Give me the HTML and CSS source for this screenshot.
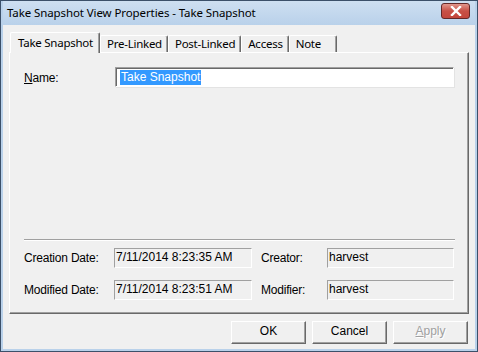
FILE: index.html
```html
<!DOCTYPE html>
<html>
  <head>
    <meta charset="UTF-8">
    <title>Take Snapshot View Properties - Take Snapshot</title>
    <link rel="stylesheet" href="styles.css">
  </head>
  <body>
    <div class="window">
      <div class="titleBar">
        <span class="titleText">Take Snapshot View Properties - Take Snapshot</span>
        <span class="closeButton">
          <svg width="14" height="10" viewBox="0 0 14 10"><path d="M3 1 L11 9 M11 1 L3 9" stroke="#fff" stroke-width="2.4" stroke-linecap="square"/></svg>
        </span>
      </div>
      <div class="client">
        <div class="tabs">
          <div class="tab selected">Take Snapshot</div>
          <div class="tab">Pre-Linked</div>
          <div class="tab">Post-Linked</div>
          <div class="tab">Access</div>
          <div class="tab last">Note</div>
        </div>
        <div class="panel">
          <div class="nameRow">
            <label class="label nameLabel"><u>N</u>ame:</label>
            <div class="nameInput"><span class="selection">Take Snapshot</span></div>
          </div>
          <div class="separator"></div>
          <div class="infoGrid">
            <span class="label">Creation Date:</span>
            <span class="readOnly dateBox">7/11/2014 8:23:35 AM</span>
            <span class="label">Creator:</span>
            <span class="readOnly userBox">harvest</span>
            <span class="label">Modified Date:</span>
            <span class="readOnly dateBox">7/11/2014 8:23:51 AM</span>
            <span class="label">Modifier:</span>
            <span class="readOnly userBox">harvest</span>
          </div>
        </div>
        <div class="buttons">
          <div class="button">OK</div>
          <div class="button">Cancel</div>
          <div class="button disabled"><u>A</u>pply</div>
        </div>
      </div>
    </div>
  </body>
</html>
```

FILE: styles.css
```css
:root {
  --face: rgb(240, 240, 240);
  --shadow: rgb(160, 160, 160);
  --darkShadow: rgb(105, 105, 105);
  --light: rgb(227, 227, 227);
  --highlight: rgb(255, 255, 255);
  --frame: rgb(185, 209, 234);
}
* { box-sizing: border-box; }
html, body {
  margin: 0;
  padding: 0;
  width: 478px;
  height: 352px;
  overflow: hidden;
}
body {
  font-family: "Liberation Sans", Arial, sans-serif;
  font-size: 12px;
  color: #000;
}
.window {
  width: 478px;
  height: 352px;
  border: 1px solid rgb(60, 80, 105);
  background-color: var(--frame);
  padding: 0 2px 2px 2px;
  display: flex;
  flex-direction: column;
}
.titleBar {
  height: 24px;
  display: flex;
  align-items: center;
  justify-content: space-between;
  padding: 0 5px 0 4px;
  background: linear-gradient(rgb(206, 223, 241), rgb(185, 209, 234));
}
.titleText {
  font-family: "Noto Sans", sans-serif;
  font-size: 11.5px;
  letter-spacing: -0.1px;
  margin-top: -1px;
}
.closeButton {
  width: 29px;
  height: 16px;
  margin-top: -4px;
  border: 1px solid rgb(100, 40, 40);
  border-radius: 3px;
  background: linear-gradient(rgb(225, 150, 140), rgb(200, 80, 70) 50%, rgb(195, 70, 60));
  display: flex;
  align-items: center;
  justify-content: center;
}
.client {
  flex: 1;
  background-color: var(--face);
  padding: 7px 6px 0 6px;
  display: flex;
  flex-direction: column;
}
.tabs {
  display: flex;
  align-items: flex-end;
  height: 20px;
  padding-left: 1px;
  position: relative;
  z-index: 1;
}
.tab {
  font-family: "Noto Sans", sans-serif;
  font-size: 11.5px;
  letter-spacing: -0.25px;
  height: 17px;
  line-height: 15px;
  padding: 0 5px 0 6px;
  border-top: 1px solid var(--highlight);
  border-left: 1px solid var(--highlight);
  border-right: 1px solid var(--darkShadow);
  border-top-left-radius: 2px;
  border-top-right-radius: 2px;
  background-color: var(--face);
  box-shadow: inset -1px 0 0 var(--shadow);
}
.tab.selected {
  height: 21px;
  margin-bottom: -1px;
  padding: 0 6px 0 7px;
  line-height: 19px;
}
.tab.last {
  min-width: 48px;
}
.panel {
  width: 460px;
  height: 262px;
  border-top: 1px solid var(--highlight);
  border-left: 1px solid var(--highlight);
  border-right: 1px solid var(--darkShadow);
  border-bottom: 1px solid var(--darkShadow);
  box-shadow: inset -1px -1px 0 var(--shadow);
  padding: 14px 14px 13px 14px;
  display: flex;
  flex-direction: column;
}
.label {
  letter-spacing: -0.2px;
}
.nameRow {
  display: flex;
  align-items: center;
  height: 20px;
}
.nameLabel {
  width: 91px;
  padding-top: 1px;
}
.nameInput {
  width: 339px;
  height: 20px;
  background-color: #fff;
  border-top: 1px solid var(--shadow);
  border-left: 1px solid var(--shadow);
  border-right: 1px solid var(--highlight);
  border-bottom: 1px solid var(--highlight);
  box-shadow: inset 1px 1px 0 var(--darkShadow), 1px 1px 0 var(--light);
  padding: 2px 0 0 4px;
  line-height: 15px;
  font-size: 12px;
}
.selection {
  background-color: rgb(51, 153, 255);
  color: #fff;
  display: inline-block;
  padding: 0 1px;
}
.separator {
  margin-top: auto;
  border-top: 1px solid var(--shadow);
  border-bottom: 1px solid var(--highlight);
  width: 431px;
}
.infoGrid {
  margin-top: 7px;
  display: grid;
  grid-template-columns: 90px 138px 75px 127px;
  column-gap: 0;
  row-gap: 12px;
  align-items: center;
}
.infoGrid > .label:nth-child(3),
.infoGrid > .label:nth-child(7) {
  padding-left: 9px;
}
.readOnly {
  height: 20px;
  border-top: 1px solid var(--shadow);
  border-left: 1px solid var(--shadow);
  border-right: 1px solid var(--highlight);
  border-bottom: 1px solid var(--highlight);
  line-height: 17px;
  padding-left: 1px;
}
.buttons {
  display: flex;
  justify-content: flex-end;
  gap: 6px;
  padding: 7px 1px 0 0;
}
.button {
  width: 75px;
  height: 23px;
  text-align: center;
  line-height: 19px;
  border-top: 1px solid var(--highlight);
  border-left: 1px solid var(--highlight);
  border-right: 1px solid var(--darkShadow);
  border-bottom: 1px solid var(--darkShadow);
  box-shadow: inset -1px -1px 0 var(--shadow);
}
.button.disabled {
  color: var(--shadow);
  text-shadow: 1px 1px 0 var(--highlight);
}
```
